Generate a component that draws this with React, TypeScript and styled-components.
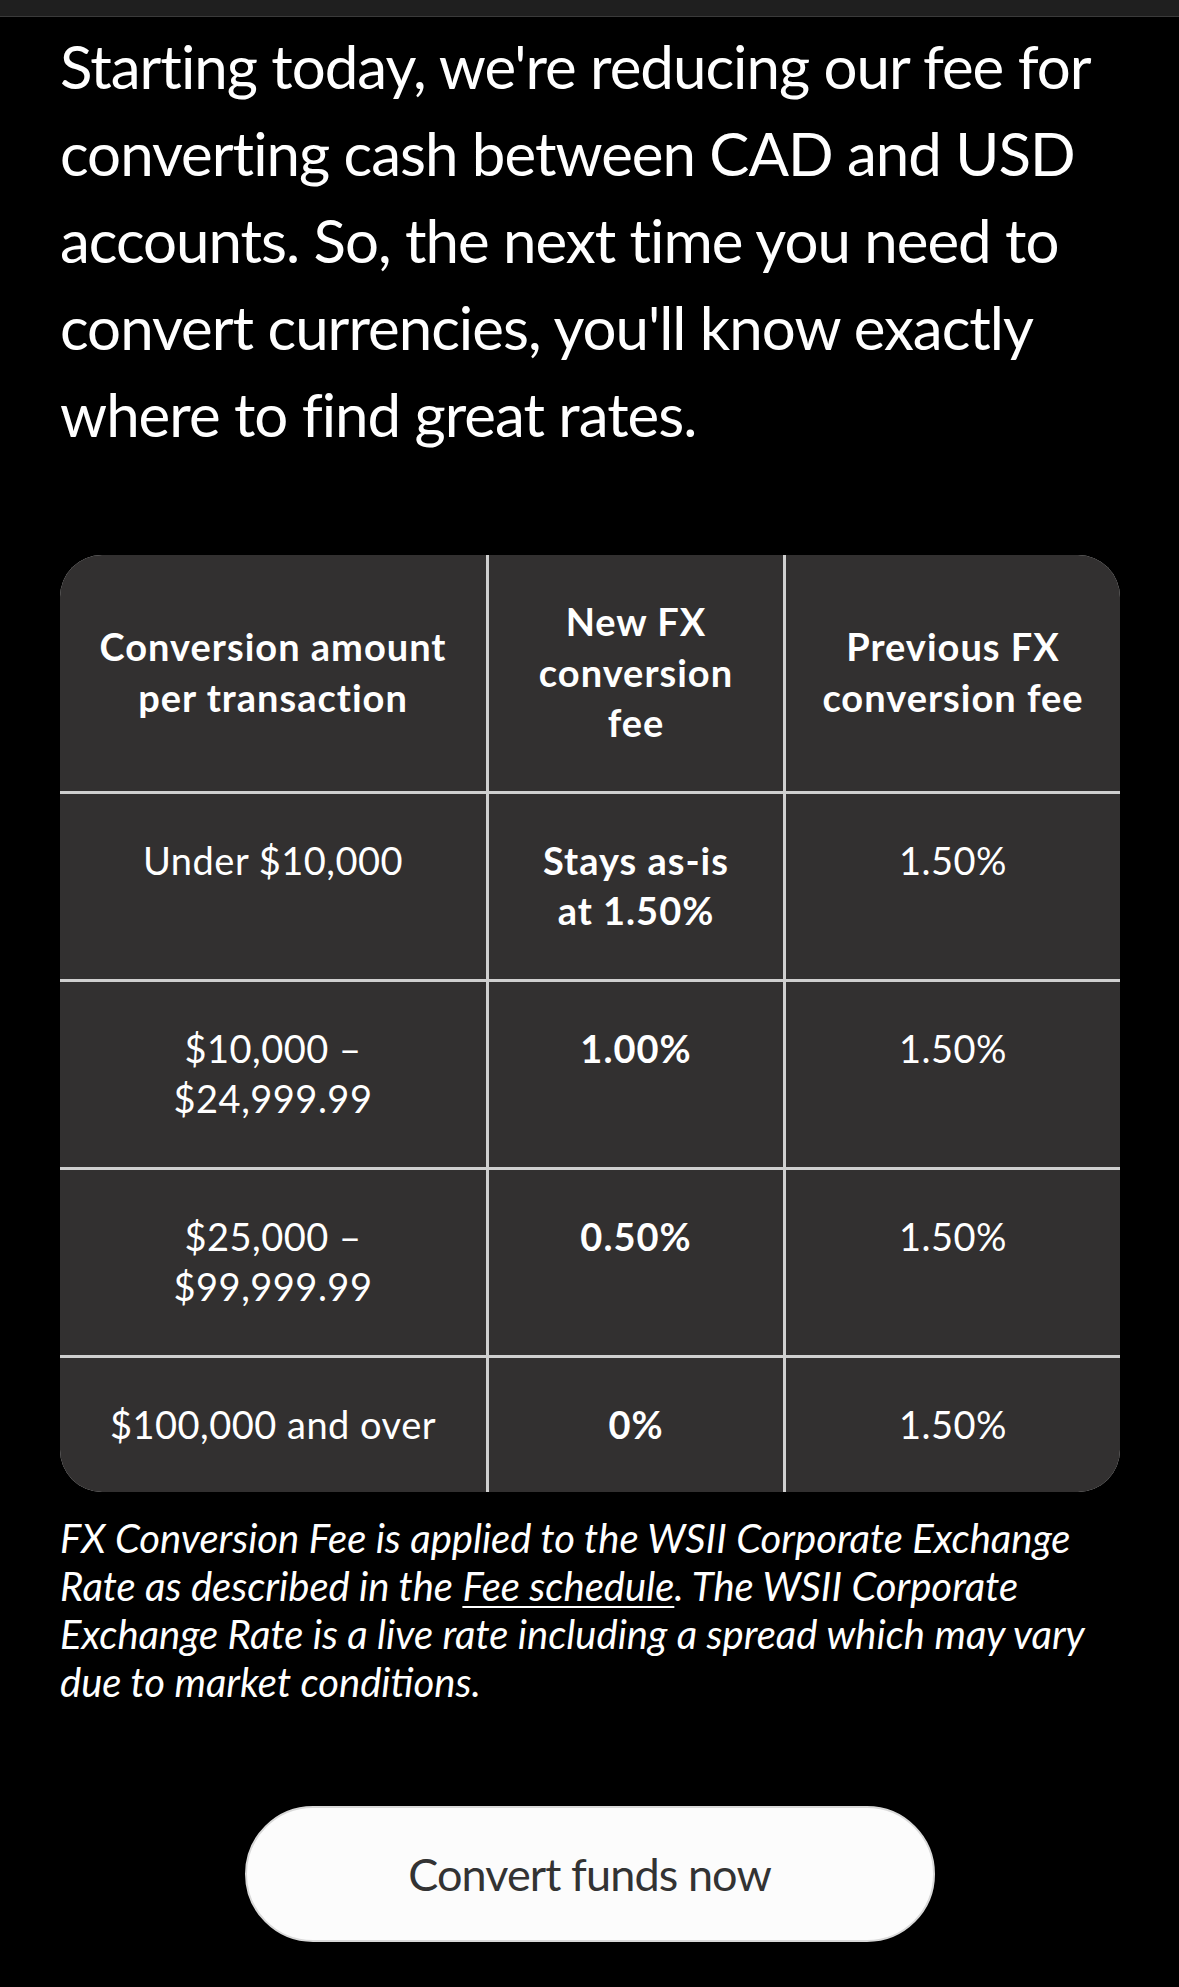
import React from 'react';
import styled, { createGlobalStyle } from 'styled-components';

const GlobalStyle = createGlobalStyle`
  html, body {
    margin: 0;
    padding: 0;
    background: #000;
  }
  body {
    font-family: Lato, "Noto Sans", "Liberation Sans", sans-serif;
    color: #fff;
    -webkit-font-smoothing: antialiased;
  }
`;

const Page = styled.div`
  width: 1179px;
  min-height: 1987px;
  background: #000;
  display: flex;
  flex-direction: column;
`;

const TopStrip = styled.div`
  height: 16px;
  background: #1f1f1f;
  border-bottom: 1px solid #3a3a3a;
`;

const Content = styled.main`
  display: flex;
  flex-direction: column;
  padding: 0 59px 0 60px;
`;

const Intro = styled.p`
  margin: 6px 0 0;
  font-size: 60px;
  line-height: 87px;
  font-weight: 400;
  letter-spacing: -1px;
  white-space: nowrap;
`;

const FeeTable = styled.div`
  margin-top: 97px;
  width: 1060px;
  display: grid;
  grid-template-columns: 426px 294px 1fr;
  gap: 3px;
  background: #cfcfcf;
  border-radius: 42px;
  overflow: hidden;
`;

const Cell = styled.div<{ $head?: boolean; $strong?: boolean }>`
  background: #323030;
  display: flex;
  flex-direction: column;
  justify-content: ${(p) => (p.$head ? 'center' : 'flex-start')};
  align-items: center;
  text-align: center;
  padding: 41px 12px 43px;
  font-size: 38px;
  line-height: 50.5px;
  font-weight: ${(p) => (p.$head || p.$strong ? 700 : 400)};
  letter-spacing: ${(p) => (p.$head || p.$strong ? '1px' : '0.5px')};
  color: #fff;
  white-space: nowrap;
`;

const Footnote = styled.p`
  margin: 22px 0 0;
  font-size: 40px;
  line-height: 48px;
  font-style: italic;
  font-weight: 400;
  letter-spacing: 0;
  white-space: nowrap;
`;

const Link = styled.span`
  text-decoration: underline;
  text-underline-offset: 5px;
  text-decoration-thickness: 2px;
`;

const ButtonRow = styled.div`
  display: flex;
  justify-content: center;
  margin-top: 100px;
  padding-right: 1px;
`;

const PrimaryButton = styled.button`
  width: 690px;
  height: 136px;
  border-radius: 68px;
  background: #fcfcfc;
  border: 2px solid #d9d9d9;
  color: #333;
  font-family: Lato, "Noto Sans", "Liberation Sans", sans-serif;
  font-size: 45px;
  font-weight: 400;
  letter-spacing: -0.9px;
  cursor: pointer;
`;

type Row = { amount: React.ReactNode; next: React.ReactNode; prev: string };

const rows: Row[] = [
  { amount: 'Under $10,000', next: <>Stays as-is<br />at 1.50%</>, prev: '1.50%' },
  { amount: <>$10,000 –<br />$24,999.99</>, next: '1.00%', prev: '1.50%' },
  { amount: <>$25,000 –<br />$99,999.99</>, next: '0.50%', prev: '1.50%' },
  { amount: '$100,000 and over', next: '0%', prev: '1.50%' },
];

export default function App() {
  return (
    <Page>
      <GlobalStyle />
      <TopStrip />
      <Content>
        <Intro>
          Starting today, we're reducing our fee for
          <br />
          converting cash between CAD and USD
          <br />
          accounts. So, the next time you need to
          <br />
          convert currencies, you'll know exactly
          <br />
          where to find great rates.
        </Intro>

        <FeeTable>
          <Cell $head>Conversion amount<br />per transaction</Cell>
          <Cell $head>New FX<br />conversion<br />fee</Cell>
          <Cell $head>Previous FX<br />conversion fee</Cell>
          {rows.map((r, i) => (
            <React.Fragment key={i}>
              <Cell>{r.amount}</Cell>
              <Cell $strong>{r.next}</Cell>
              <Cell>{r.prev}</Cell>
            </React.Fragment>
          ))}
        </FeeTable>

        <Footnote>
          FX Conversion Fee is applied to the WSII Corporate Exchange
          <br />
          Rate as described in the <Link>Fee schedule</Link>. The WSII Corporate
          <br />
          Exchange Rate is a live rate including a spread which may vary
          <br />
          due to market conditions.
        </Footnote>

        <ButtonRow>
          <PrimaryButton>Convert funds now</PrimaryButton>
        </ButtonRow>
      </Content>
    </Page>
  );
}
